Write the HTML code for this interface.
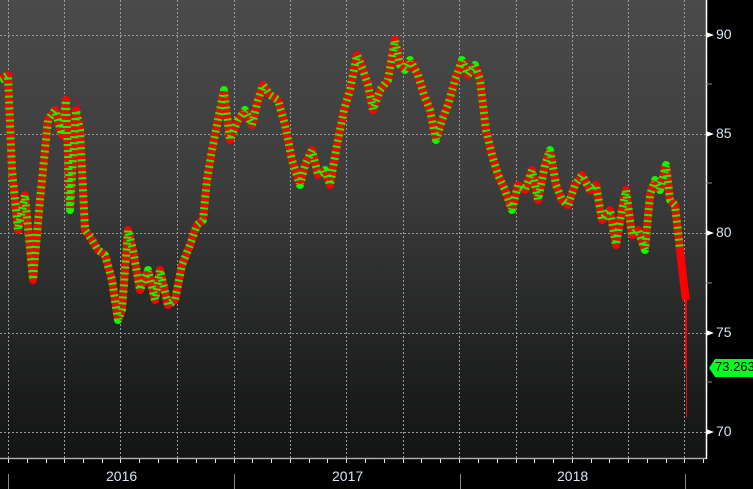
<!DOCTYPE html>
<html><head><style>
html,body{margin:0;padding:0;background:#000;width:753px;height:489px;overflow:hidden}
#plot{position:absolute;left:0;top:0;width:706px;height:458px;background:linear-gradient(#4a4a4a 0%,#3c3d3c 40%,#2a2b2b 65%,#1c1d1d 85%,#131414 100%)}
.t{position:absolute;font:14px "Liberation Sans",sans-serif;color:#d8e4f4}
</style></head><body>
<div id="plot"></div>
<svg width="753" height="489" style="position:absolute;left:0;top:0">
<g stroke="#9a9a9a" stroke-dasharray="2,2" stroke-width="1">
<line x1="0" y1="35.5" x2="706" y2="35.5"/><line x1="0" y1="134.5" x2="706" y2="134.5"/><line x1="0" y1="233.5" x2="706" y2="233.5"/><line x1="0" y1="333.5" x2="706" y2="333.5"/><line x1="0" y1="432.5" x2="706" y2="432.5"/>
<line x1="8.5" y1="0" x2="8.5" y2="458"/><line x1="64.5" y1="0" x2="64.5" y2="458"/><line x1="120.5" y1="0" x2="120.5" y2="458"/><line x1="177.5" y1="0" x2="177.5" y2="458"/><line x1="234.5" y1="0" x2="234.5" y2="458"/><line x1="290.5" y1="0" x2="290.5" y2="458"/><line x1="346.5" y1="0" x2="346.5" y2="458"/><line x1="403.5" y1="0" x2="403.5" y2="458"/><line x1="459.5" y1="0" x2="459.5" y2="458"/><line x1="516.5" y1="0" x2="516.5" y2="458"/><line x1="572.5" y1="0" x2="572.5" y2="458"/><line x1="628.5" y1="0" x2="628.5" y2="458"/><line x1="684.5" y1="0" x2="684.5" y2="458"/>
</g>
<g fill="#fff"><polygon points="706,32 714,35 706,38"/><polygon points="706,131 714,134 706,137"/><polygon points="706,230 714,233 706,236"/><polygon points="706,330 714,333 706,336"/><polygon points="706,429 714,432 706,435"/></g>
<line x1="0" y1="458.5" x2="706" y2="458.5" stroke="#aaa" stroke-width="1.5"/>
<line x1="706.5" y1="0" x2="706.5" y2="459" stroke="#fff" stroke-width="1.5"/>
<g stroke="#ddd" stroke-width="1">
<path d="M8.5 459v4M27.5 459v4M46.5 459v4M64.5 459v4M83.5 459v4M102.5 459v4M120.5 459v4M139.5 459v4M158.5 459v4M177.5 459v4M196.5 459v4M215.5 459v4M234.5 459v4M252.5 459v4M271.5 459v4M290.5 459v4M309.5 459v4M327.5 459v4M346.5 459v4M365.5 459v4M384.5 459v4M403.5 459v4M421.5 459v4M440.5 459v4M459.5 459v4M478.5 459v4M497.5 459v4M516.5 459v4M534.5 459v4M553.5 459v4M572.5 459v4M591.5 459v4M609.5 459v4M628.5 459v4M647.5 459v4M666.5 459v4M684.5 459v4M703.5 459v4"/>
</g>
<g stroke="#888"><path d="M8.5 474v15M234.5 474v15M460.5 474v15M685.5 474v15M706 84h6M706 183h6M706 283h6M706 382h6"/></g>
<g fill="none" stroke-linejoin="round">
<polyline stroke="#ff0000" stroke-width="8" points="0,80 8,75 12,170 18,230 25,195 33,280 40,200 48,120 55,110 62,135 66,100 70,210 76,110 80,130 85,230 92,240 98,250 105,255 112,280 118,320 122,310 128,230 133,250 140,290 148,270 155,300 160,270 168,305 175,300 182,265 190,245 197,225 203,220 207,180 212,150 218,120 224,90 230,140 238,120 245,110 252,125 258,100 263,85 270,95 278,100 285,125 292,160 300,185 305,165 312,150 318,175 325,170 330,185 337,145 344,110 350,90 357,55 363,70 368,85 373,110 380,90 388,80 395,40 400,65 405,70 410,60 418,75 424,95 430,110 436,140 442,120 448,105 455,80 462,60 468,75 475,65 480,80 486,130 492,155 498,175 505,190 512,210 518,185 525,190 532,170 538,200 545,165 550,150 556,185 562,200 568,205 575,185 582,175 590,190 596,185 602,220 610,210 616,245 622,210 626,190 632,235 638,230 645,250 650,195 655,180 660,190 666,165 670,200 675,205 680,250 684,285 686,300"/>
<polyline stroke="#00ff00" stroke-width="8" stroke-dasharray="2,4" points="0,80 8,75 12,170 18,230 25,195 33,280 40,200 48,120 55,110 62,135 66,100 70,210 76,110 80,130 85,230 92,240 98,250 105,255 112,280 118,320 122,310 128,230 133,250 140,290 148,270 155,300 160,270 168,305 175,300 182,265 190,245 197,225 203,220 207,180 212,150 218,120 224,90 230,140 238,120 245,110 252,125 258,100 263,85 270,95 278,100 285,125 292,160 300,185 305,165 312,150 318,175 325,170 330,185 337,145 344,110 350,90 357,55 363,70 368,85 373,110 380,90 388,80 395,40 400,65 405,70 410,60 418,75 424,95 430,110 436,140 442,120 448,105 455,80 462,60 468,75 475,65 480,80 486,130 492,155 498,175 505,190 512,210 518,185 525,190 532,170 538,200 545,165 550,150 556,185 562,200 568,205 575,185 582,175 590,190 596,185 602,220 610,210 616,245 622,210 626,190 632,235 638,230 645,250 650,195 655,180 660,190 666,165 670,200 675,205 680,250"/>
</g>
<rect x="685" y="285" width="2" height="83" fill="#ff0000"/><rect x="686" y="365" width="1" height="52" fill="#ff0000"/>
<polygon points="709,368 715,359 753,359 753,377 715,377" fill="#00ff22"/>
</svg>
<div class="t" style="left:716px;top:26px">90</div>
<div class="t" style="left:716px;top:125px">85</div>
<div class="t" style="left:716px;top:224px">80</div>
<div class="t" style="left:716px;top:324px">75</div>
<div class="t" style="left:716px;top:423px">70</div>
<div class="t" style="left:106px;top:468px">2016</div>
<div class="t" style="left:332px;top:468px">2017</div>
<div class="t" style="left:557px;top:468px">2018</div>
<div class="t" style="left:715px;top:359px;color:#000;font-size:13px">73.263</div>
</body></html>
